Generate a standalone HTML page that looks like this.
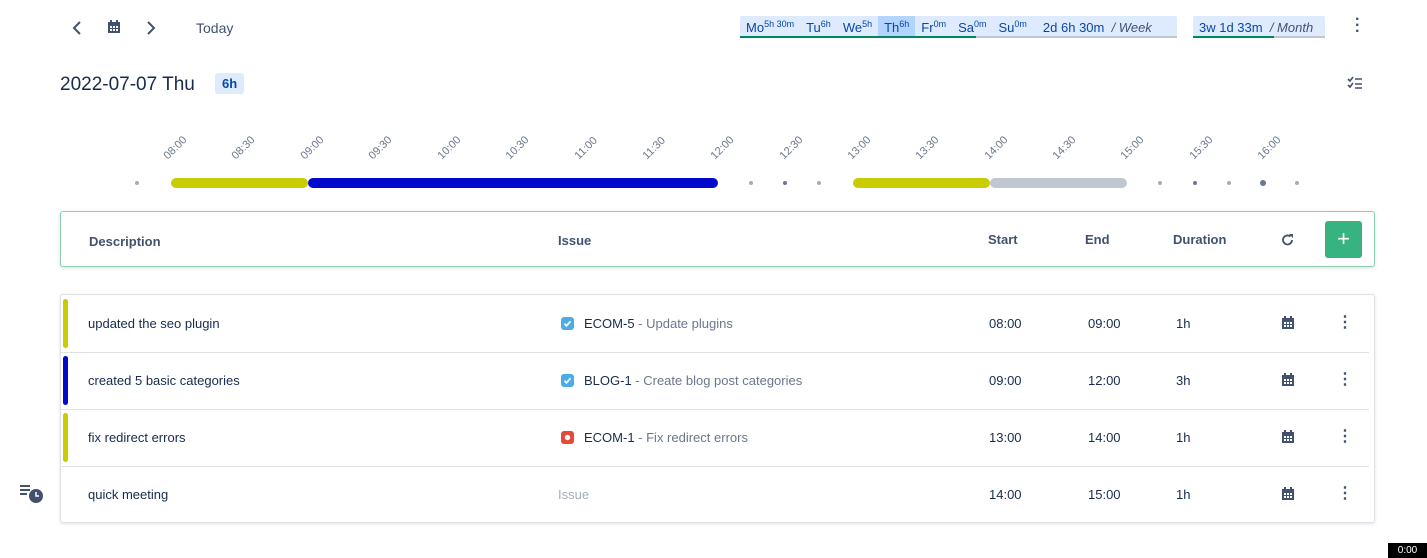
<!DOCTYPE html>
<html><head><meta charset="utf-8"><style>
body{margin:0;width:1427px;height:558px;background:#fff;font-family:"Liberation Sans",sans-serif;color:#172b4d;position:relative;overflow:hidden}
.a{position:absolute}
.wk{position:absolute;top:16px;height:22px;background:#deebff;font-size:13px;color:#0747a6;display:flex;align-items:center;border-radius:2px}
.wk span{padding:0 6px;height:100%;display:flex;align-items:center}
.wk sup{font-size:9px;position:relative;top:-3px}
.lbl{position:absolute;top:150px;font-size:11px;color:#6b778c;transform:rotate(-45deg);transform-origin:left bottom}
.dot{position:absolute;top:181px;width:4px;height:4px;border-radius:50%;background:#a5adba}
.bar{position:absolute;top:178px;height:10px;border-radius:5px}
.hdr{font-size:13px;font-weight:bold;color:#42526e;position:absolute;top:232px}
.row{position:absolute;left:61px;width:1308px;height:57px;border-bottom:1px solid #dfe1e6;font-size:13px}
.row>div,.row>svg{position:absolute;top:21px}
.stripe{position:absolute;left:2px!important;top:4px!important;width:5px;height:49px;border-radius:3px}
.ic{top:22px!important;left:500px}
.cal{left:1221px;top:21px!important}
.kb{left:1276px;color:#42526e;font-weight:bold;top:17px!important;font-size:16px}
</style></head><body>
<svg class="a" style="left:70px;top:20px" width="14" height="16"><path d="M10 2L4 8l6 6" stroke="#42526e" stroke-width="2" fill="none"/></svg>
<svg class="a" style="left:107px;top:20px" width="14" height="14"><rect x="1" y="2" width="12" height="11" fill="#42526e"/><rect x="3" y="0" width="2" height="3" fill="#42526e"/><rect x="9" y="0" width="2" height="3" fill="#42526e"/><g fill="#fff"><rect x="3" y="6" width="2" height="2"/><rect x="6" y="6" width="2" height="2"/><rect x="9" y="6" width="2" height="2"/><rect x="3" y="9" width="2" height="2"/><rect x="6" y="9" width="2" height="2"/><rect x="9" y="9" width="2" height="2"/></g></svg>
<svg class="a" style="left:144px;top:20px" width="14" height="16"><path d="M4 2l6 6-6 6" stroke="#42526e" stroke-width="2" fill="none"/></svg>
<div class="a" style="left:196px;top:20px;font-size:14px;color:#42526e">Today</div>
<div class="wk" style="left:740px;width:437px"><span>Mo<sup>5h 30m</sup></span><span>Tu<sup>6h</sup></span><span>We<sup>5h</sup></span><span style="background:#b3d4ff">Th<sup>6h</sup></span><span>Fr<sup>0m</sup></span><span>Sa<sup>0m</sup></span><span>Su<sup>0m</sup></span><span style="margin-left:4px;font-size:13px">2d 6h 30m&nbsp;&nbsp;<i style="color:#42526e">/ Week</i></span></div>
<div class="a" style="left:740px;top:36px;width:236px;height:2px;background:#00875a"></div>
<div class="a" style="left:976px;top:36px;width:201px;height:2px;background:#c1c7d0"></div>
<div class="wk" style="left:1193px;width:132px"><span>3w 1d 33m&nbsp;&nbsp;<i style="color:#42526e">/ Month</i></span></div>
<div class="a" style="left:1193px;top:36px;width:81px;height:2px;background:#00875a"></div>
<div class="a" style="left:1274px;top:36px;width:51px;height:2px;background:#c1c7d0"></div>
<div class="a" style="left:1355px;top:17px;font-size:16px;color:#42526e;font-weight:bold;line-height:6px">·<br>·<br>·</div>
<div class="a" style="left:60px;top:74px;font-size:19px;color:#172b4d">2022-07-07 Thu</div>
<div class="a" style="left:215px;top:73px;background:#deebff;color:#0747a6;font-size:13px;font-weight:bold;padding:3px 7px;border-radius:3px">6h</div>
<svg class="a" style="left:1347px;top:76px" width="16" height="14"><path d="M1 3l2 2 3-4M1 9l2 2 3-4" stroke="#42526e" stroke-width="1.6" fill="none"/><path d="M8 3h7M8 8h7M8 12h7" stroke="#42526e" stroke-width="1.6"/></svg>

<div class="lbl" style="left:170px">08:00</div><div class="lbl" style="left:238px">08:30</div><div class="lbl" style="left:307px">09:00</div><div class="lbl" style="left:375px">09:30</div><div class="lbl" style="left:444px">10:00</div><div class="lbl" style="left:512px">10:30</div><div class="lbl" style="left:581px">11:00</div><div class="lbl" style="left:649px">11:30</div><div class="lbl" style="left:717px">12:00</div><div class="lbl" style="left:786px">12:30</div><div class="lbl" style="left:854px">13:00</div><div class="lbl" style="left:922px">13:30</div><div class="lbl" style="left:991px">14:00</div><div class="lbl" style="left:1059px">14:30</div><div class="lbl" style="left:1127px">15:00</div><div class="lbl" style="left:1196px">15:30</div><div class="lbl" style="left:1264px">16:00</div>
<div class="dot" style="left:135px"></div><div class="dot" style="left:749px"></div><div class="dot" style="left:783px;background:#6b778c"></div><div class="dot" style="left:817px"></div><div class="dot" style="left:1158px"></div><div class="dot" style="left:1193px;background:#6b778c"></div><div class="dot" style="left:1227px"></div><div class="dot" style="left:1260px;width:6px;height:6px;top:180px;background:#6b778c"></div><div class="dot" style="left:1295px"></div>
<div class="bar" style="left:171px;width:137px;background:#c9cc00"></div>
<div class="bar" style="left:308px;width:410px;background:#0009cc"></div>
<div class="bar" style="left:853px;width:137px;background:#c9cc00"></div>
<div class="bar" style="left:990px;width:137px;background:#c1c7d0"></div>

<div class="a" style="left:60px;top:211px;width:1313px;height:54px;border:1px solid #8fd0b0;border-radius:3px;box-shadow:0 1px 3px rgba(0,0,0,.15)"></div>
<div class="hdr" style="left:89px;top:234px">Description</div>
<div class="hdr" style="left:558px;top:233px">Issue</div>
<div class="hdr" style="left:988px">Start</div>
<div class="hdr" style="left:1085px">End</div>
<div class="hdr" style="left:1173px">Duration</div>
<svg class="a" style="left:1281px;top:233px" width="14" height="14"><path d="M11 7a4.5 4.5 0 1 1-1.5-3.4" stroke="#42526e" stroke-width="1.8" fill="none"/><path d="M8 1h4v4z" fill="#42526e"/></svg>
<div class="a" style="left:1325px;top:221px;width:37px;height:37px;background:#36b37e;border-radius:3px;color:#fff;font-size:22px;text-align:center;line-height:36px">+</div>

<div class="a" style="left:60px;top:294px;width:1313px;height:227px;border:1px solid #dfe1e6;border-radius:3px;box-shadow:0 1px 3px rgba(0,0,0,.12)"></div>
<svg width="0" height="0" style="position:absolute"><defs>
<g id="cal"><rect x="0" y="2" width="12" height="11" fill="#42526e"/><rect x="2" y="0" width="2" height="3" fill="#42526e"/><rect x="8" y="0" width="2" height="3" fill="#42526e"/><g fill="#fff"><rect x="2" y="6" width="2" height="2"/><rect x="5" y="6" width="2" height="2"/><rect x="8" y="6" width="2" height="2"/><rect x="2" y="9" width="2" height="2"/><rect x="5" y="9" width="2" height="2"/><rect x="8" y="9" width="2" height="2"/></g></g>
<g id="chk"><rect width="13" height="13" rx="3" fill="#4bade8"/><path d="M3.5 6.8l2 2 4-4.5" stroke="#fff" stroke-width="1.8" fill="none"/></g>
<g id="bug"><rect width="13" height="13" rx="3" fill="#e5493a"/><circle cx="6.5" cy="6.5" r="2.7" fill="#fff"/></g>
</defs></svg>
<div class="row" style="top:295px"><div class="stripe" style="background:#c9cc00"></div><div style="left:27px">updated the seo plugin</div><svg class="ic" width="13" height="13"><use href="#chk"/></svg><div style="left:523px">ECOM-5 <span style="color:#6b778c">- Update plugins</span></div><div style="left:928px">08:00</div><div style="left:1027px">09:00</div><div style="left:1115px">1h</div><svg class="cal" width="12" height="13"><use href="#cal"/></svg><div class="kb">⋮</div></div>
<div class="row" style="top:352px"><div class="stripe" style="background:#0009cc"></div><div style="left:27px">created 5 basic categories</div><svg class="ic" width="13" height="13"><use href="#chk"/></svg><div style="left:523px">BLOG-1 <span style="color:#6b778c">- Create blog post categories</span></div><div style="left:928px">09:00</div><div style="left:1027px">12:00</div><div style="left:1115px">3h</div><svg class="cal" width="12" height="13"><use href="#cal"/></svg><div class="kb">⋮</div></div>
<div class="row" style="top:409px"><div class="stripe" style="background:#c9cc00"></div><div style="left:27px">fix redirect errors</div><svg class="ic" width="13" height="13"><use href="#bug"/></svg><div style="left:523px">ECOM-1 <span style="color:#6b778c">- Fix redirect errors</span></div><div style="left:928px">13:00</div><div style="left:1027px">14:00</div><div style="left:1115px">1h</div><svg class="cal" width="12" height="13"><use href="#cal"/></svg><div class="kb">⋮</div></div>
<div class="row" style="top:466px;border-bottom:none"><div style="left:27px">quick meeting</div><div style="left:497px;color:#a5adba">Issue</div><div style="left:928px">14:00</div><div style="left:1027px">15:00</div><div style="left:1115px">1h</div><svg class="cal" width="12" height="13"><use href="#cal"/></svg><div class="kb">⋮</div></div>
<svg class="a" style="left:19px;top:484px" width="26" height="20"><path d="M1 2h10M1 6h10M1 10h7" stroke="#42526e" stroke-width="2"/><circle cx="17" cy="12" r="7" fill="#42526e"/><path d="M17 8v4h3" stroke="#fff" stroke-width="1.5" fill="none"/></svg>
<div class="a" style="left:1388px;top:543px;width:39px;height:15px;background:#000;color:#fff;font-size:10px;text-align:center;line-height:15px">0:00</div>
</body></html>
